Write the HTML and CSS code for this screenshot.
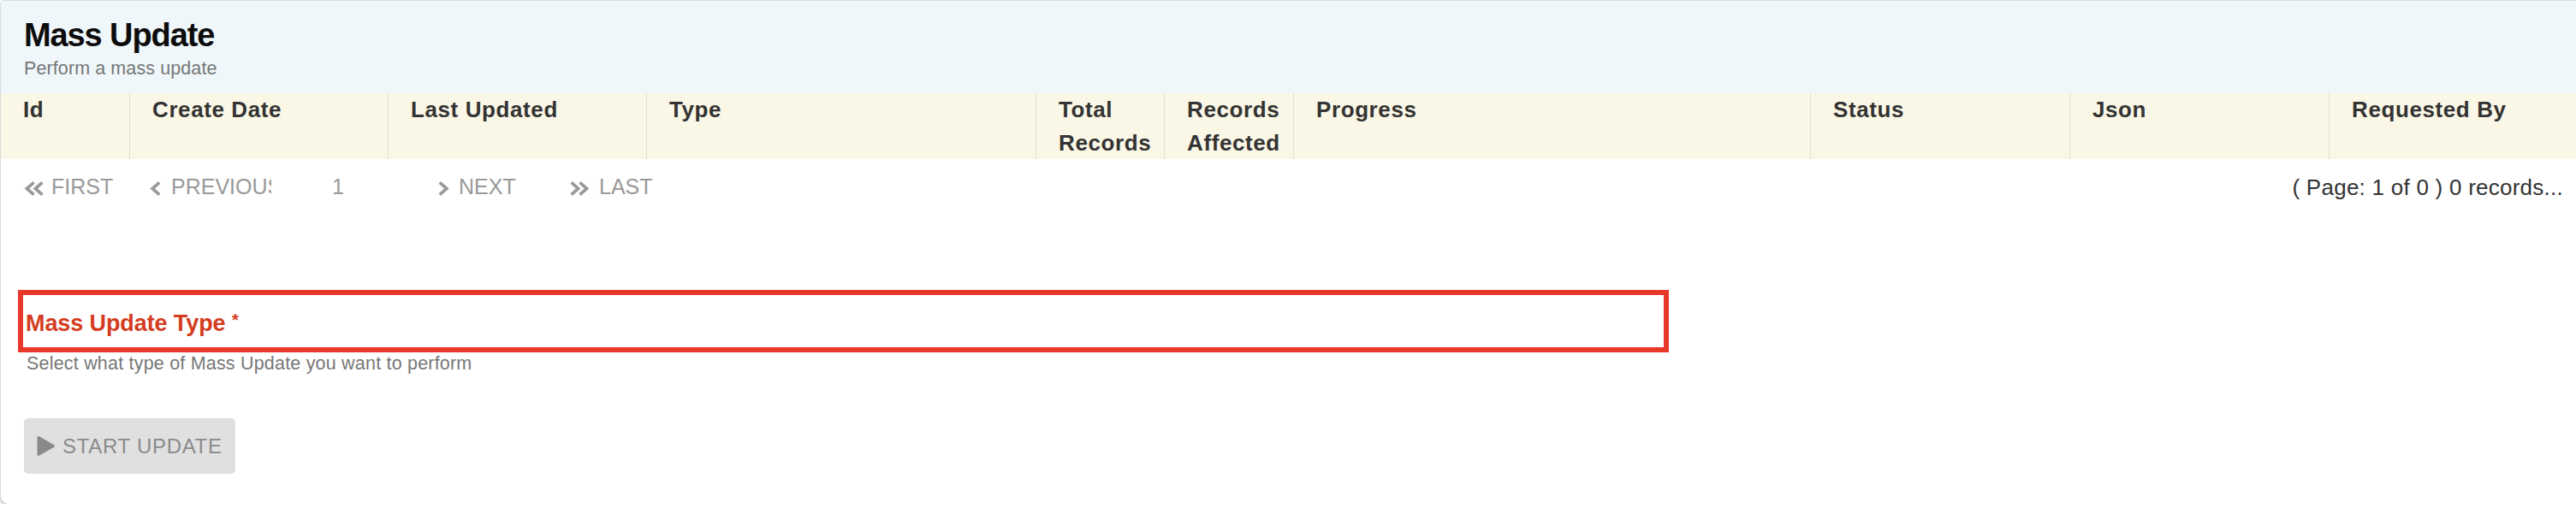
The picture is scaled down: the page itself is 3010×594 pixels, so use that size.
FILE: index.html
```html
<!DOCTYPE html>
<html lang="en">
<head>
<meta charset="utf-8">
<title>Mass Update</title>
<link rel="stylesheet" href="styles.css">
</head>
<body>
<div class="card">
  <div class="page-header">
    <h1 class="title">Mass Update</h1>
    <p class="subtitle">Perform a mass update</p>
  </div>

  <div class="grid-head">
    <div class="th">Id</div>
    <div class="th">Create Date</div>
    <div class="th">Last Updated</div>
    <div class="th">Type</div>
    <div class="th">Total Records</div>
    <div class="th">Records Affected</div>
    <div class="th">Progress</div>
    <div class="th">Status</div>
    <div class="th">Json</div>
    <div class="th">Requested By</div>
  </div>

  <div class="pager">
    <div class="pg pg-first">
      <svg class="ico ico-dbl" viewBox="0 0 24 18" aria-hidden="true"><polyline points="12,1.5 3.4,9 12,16.5"/><polyline points="22.5,1.5 13.9,9 22.5,16.5"/></svg>
      <span>FIRST</span>
    </div>
    <div class="pg pg-prev">
      <svg class="ico ico-sgl" viewBox="0 0 13 18" aria-hidden="true"><polyline points="11.5,1.5 2.9,9 11.5,16.5"/></svg>
      <span>PREVIOUS</span>
    </div>
    <div class="pg pg-num"><span>1</span></div>
    <div class="pg pg-next">
      <svg class="ico ico-sgl" viewBox="0 0 13 18" aria-hidden="true"><polyline points="1.5,1.5 10.1,9 1.5,16.5"/></svg>
      <span>NEXT</span>
    </div>
    <div class="pg pg-last">
      <svg class="ico ico-dbl" viewBox="0 0 24 18" aria-hidden="true"><polyline points="1.5,1.5 10.1,9 1.5,16.5"/><polyline points="12,1.5 20.6,9 12,16.5"/></svg>
      <span>LAST</span>
    </div>
    <div class="pg-info">( Page: 1 of 0 ) 0 records...</div>
  </div>

  <form class="mu-form">
    <div class="field-box">
      <label class="field-label">Mass Update Type <span class="req">*</span></label>
    </div>
    <p class="help">Select what type of Mass Update you want to perform</p>
    <button type="button" class="btn-start" disabled>
      <svg class="play" viewBox="0 0 23 25" aria-hidden="true"><path d="M3 2.5 L20.5 12.5 L3 22.5 Z"/></svg>
      <span>START UPDATE</span>
    </button>
  </form>
</div>
</body>
</html>
```

FILE: styles.css
```css
html, body {
  margin: 0;
  padding: 0;
  background: #ffffff;
  overflow: hidden;
}

body {
  font-family: "Liberation Sans", Arial, Helvetica, sans-serif;
  color: #333333;
}

.card {
  background: #ffffff;
  border-top: 1px solid #dcdcdc;
  border-left: 1px solid #dcdcdc;
  border-radius: 5px 0 0 9px;
  box-shadow: 0 2px 3px rgba(0, 0, 0, 0.32);
  overflow: hidden;
  padding-bottom: 35px;
}

/* ---------- page header ---------- */
.page-header {
  background: #eff7fa;
  padding: 18px 0 16px 27px;
}

.title {
  margin: 0;
  font-size: 38px;
  line-height: 44px;
  font-weight: 700;
  letter-spacing: -1.1px;
  color: #0c0c0c;
}

.subtitle {
  margin: 4px 0 0 0;
  font-size: 21.5px;
  line-height: 26px;
  letter-spacing: 0.1px;
  color: #777777;
}

/* ---------- table header ---------- */
.grid-head {
  display: grid;
  grid-template-columns: 150px 302px 302px 455px 150px 151px 604px 303px 303px 1fr;
  background: #faf7e6;
}

.th {
  padding: 0 16px 0 26px;
  font-size: 26px;
  line-height: 38.5px;
  min-height: 77px;
  font-weight: 700;
  letter-spacing: 0.6px;
  color: #333333;
}

.th + .th {
  border-left: 1px solid #e3e0cf;
}

/* ---------- pager ---------- */
.pager {
  display: flex;
  align-items: flex-start;
  height: 40px;
  padding: 12px 15px 0 27px;
}

.pg {
  display: flex;
  align-items: center;
  height: 40px;
  font-size: 25px;
  color: #999999;
  white-space: nowrap;
  overflow: hidden;
  flex: none;
}

.ico {
  flex: none;
  margin-top: 4px;
  height: 17px;
  fill: none;
  stroke: #999999;
  stroke-width: 3.9;
  stroke-linejoin: miter;
  stroke-linecap: butt;
}

.ico-dbl { width: 23px; }
.ico-sgl { width: 13px; }

.pg-first { width: 147px; gap: 9px; }
.pg-prev { width: 142px; gap: 12px; }
.pg-num { width: 195px; padding-left: 71px; box-sizing: border-box; }
.pg-next { width: 154px; gap: 11px; }
.pg-last { gap: 11px; }

.pg-info {
  margin-left: auto;
  padding-top: 2px;
  font-size: 26px;
  line-height: 38px;
  letter-spacing: 0.25px;
  color: #333333;
  white-space: nowrap;
}

/* ---------- form ---------- */
.mu-form {
  padding: 101px 0 0 20px;
  margin: 0;
}

.field-box {
  box-sizing: border-box;
  width: 1929px;
  height: 73px;
  border: 6px solid #e8382a;
  padding: 14px 0 0 3px;
}

.field-label {
  display: block;
  font-size: 27px;
  line-height: 39px;
  font-weight: 700;
  letter-spacing: -0.1px;
  color: #d43c20;
}

.req {
  font-size: 20px;
  line-height: 1;
  vertical-align: 6px;
  font-weight: 700;
  letter-spacing: 0;
}

.help {
  margin: 0;
  padding-left: 10px;
  font-size: 21.5px;
  line-height: 26px;
  letter-spacing: 0.2px;
  color: #777777;
}

.btn-start {
  display: flex;
  align-items: center;
  gap: 8px;
  box-sizing: border-box;
  width: 247px;
  height: 65px;
  margin: 51px 0 0 7px;
  padding: 0 0 0 14px;
  border: none;
  border-radius: 5px;
  background: #e0e0e0;
  font-family: "Liberation Sans", Arial, Helvetica, sans-serif;
  font-size: 24px;
  letter-spacing: 0.7px;
  color: #8a8a8a;
  cursor: default;
}

.play {
  flex: none;
  width: 23px;
  height: 25px;
  fill: #8a8a8a;
  stroke: #8a8a8a;
  stroke-width: 3;
  stroke-linejoin: round;
}
```
